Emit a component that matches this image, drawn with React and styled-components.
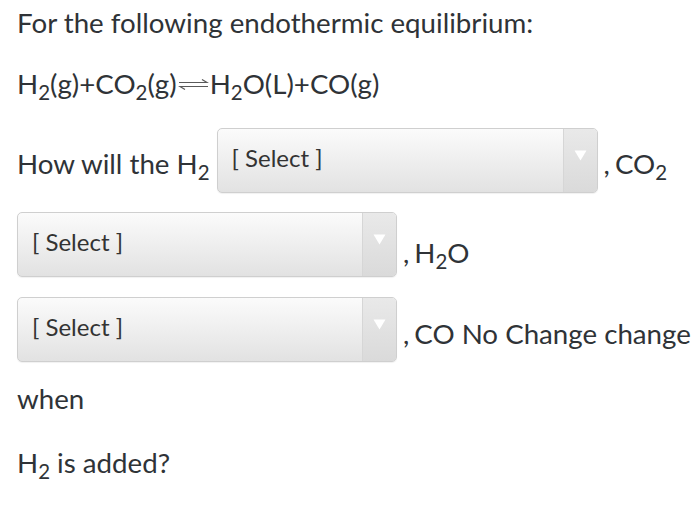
import React from 'react'
import styled, { createGlobalStyle } from 'styled-components'

const Global = createGlobalStyle`
  html, body {
    margin: 0;
    padding: 0;
    background: #ffffff;
  }
  body {
    font-family: Lato, "Open Sans", "Liberation Sans", sans-serif;
    color: #2f3337;
  }
`

const Page = styled.div`
  width: 700px;
  height: 524px;
  padding: 3px 0 0 17px;
  box-sizing: border-box;
  font-size: 27.7px;
`

const Para = styled.p`
  margin: 0 0 ${(p) => p.gap || 0}px;
  line-height: 40px;
  white-space: nowrap;
`

const Sub = styled.sub`
  font-size: 0.74em;
  vertical-align: -0.28em;
  line-height: 0;
`

const Row = styled.div`
  display: flex;
  align-items: flex-end;
  white-space: nowrap;
  margin-bottom: ${(p) => p.gap || 0}px;
`

const Lead = styled.span`
  line-height: 1;
  padding-bottom: ${(p) => p.drop}px;
  margin-right: 7px;
`

const Trail = styled.span`
  line-height: 1;
  padding-bottom: ${(p) => p.drop}px;
  margin-left: 6px;
`

const Comma = styled.span`
  margin-right: 5px;
`

const SelectBox = styled.div`
  width: ${(p) => p.width}px;
  height: 65px;
  box-sizing: border-box;
  display: flex;
  border: 1px solid #cfcfcf;
  border-radius: 5px;
  background: linear-gradient(#fbfbfb, #e2e2e2);
  box-shadow: 0 1px 1px rgba(0, 0, 0, 0.06);
  overflow: hidden;
`

const SelectLabel = styled.span`
  flex: 1;
  padding: 14px 0 0 14px;
  font-size: 24px;
  color: #333;
`

const ArrowZone = styled.span`
  width: 34px;
  border-left: 1px solid #d6d6d6;
  background: linear-gradient(#e9e9e9, #dadada);
  display: flex;
  justify-content: center;
  padding-top: 21px;
  box-sizing: border-box;
`

const Arrow = () => (
  <svg width="13" height="11" viewBox="0 0 13 11">
    <path d="M0.5 0.5 L12.5 0.5 L6.5 10.5 Z" fill="#ffffff" />
  </svg>
)

const Select = ({ width }) => (
  <SelectBox width={width}>
    <SelectLabel>[ Select ]</SelectLabel>
    <ArrowZone>
      <Arrow />
    </ArrowZone>
  </SelectBox>
)

const Equil = styled.svg`
  vertical-align: 0.15em;
  margin: 0 1px;
`

const Harpoons = () => (
  <Equil width="31" height="11" viewBox="0 0 31 11">
    <path d="M1 3.5 H29 L24 0.5" stroke="#5a5a5a" strokeWidth="1.2" fill="none" />
    <path d="M30 7.5 H2 L7 10.5" stroke="#5a5a5a" strokeWidth="1.2" fill="none" />
  </Equil>
)

export default function App() {
  return (
    <Page>
      <Global />
      <Para gap={21}>For the following endothermic equilibrium:</Para>
      <Para gap={24}>
        H<Sub>2</Sub>(g)+CO<Sub>2</Sub>(g)
        <Harpoons />
        H<Sub>2</Sub>O(L)+CO(g)
      </Para>
      <Row gap={19}>
        <Lead drop={15}>
          How will the H<Sub>2</Sub>
        </Lead>
        <Select width={381} />
        <Trail drop={15}>
          <Comma>,</Comma>CO<Sub>2</Sub>
        </Trail>
      </Row>
      <Row gap={20}>
        <Select width={380} />
        <Trail drop={10}>
          <Comma>,</Comma>H<Sub>2</Sub>O
        </Trail>
      </Row>
      <Row gap={17}>
        <Select width={380} />
        <Trail drop={14}>
          <Comma>,</Comma>CO No Change change
        </Trail>
      </Row>
      <Para gap={24}>when</Para>
      <Para>
        H<Sub>2</Sub> is added?
      </Para>
    </Page>
  )
}
